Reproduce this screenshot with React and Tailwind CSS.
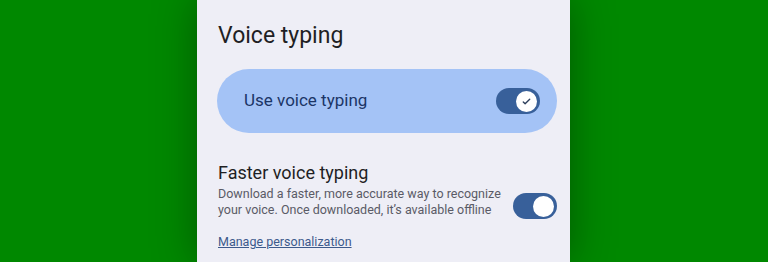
import React from 'react';

const Toggle = ({ check }) => (
  <div className="w-[44px] h-[26px] rounded-full bg-[#38609a] flex items-center justify-end pr-[3px]">
    <div className="w-[21px] h-[21px] rounded-full bg-white flex items-center justify-center">
      {check && (
        <svg width="11" height="11" viewBox="0 0 24 24" fill="none" stroke="#2c3e5c" strokeWidth="3" strokeLinecap="round" strokeLinejoin="round">
          <path d="M5 13l4 4L19 7" />
        </svg>
      )}
    </div>
  </div>
);

export default function App() {
  return (
    <div className="w-[768px] h-[262px] bg-[#008800] flex justify-center overflow-hidden" style={{ fontFamily: 'Roboto, "Noto Sans", sans-serif' }}>
      <div className="w-[373px] h-full bg-[#eeeef6] shadow-[0_0_40px_rgba(0,0,0,0.35)] ml-[-1px] pl-[20px] pr-[13px] pt-[21px]">
        <h1 className="text-[23px] leading-[30px] text-[#1f1f24] pl-[1px]">Voice typing</h1>
        <div className="mt-[18px] h-[64px] rounded-full bg-[#a4c3f6] flex items-center justify-between pl-[27px] pr-[17px]">
          <span className="text-[17px] text-[#1b3566]">Use voice typing</span>
          <Toggle check />
        </div>
        <div className="mt-[28px] flex items-start justify-between">
          <div className="pl-[1px]">
            <div className="text-[18px] leading-[24px] text-[#1f1f24]">Faster voice typing</div>
            <div className="text-[12.5px] leading-[16px] text-[#5a5b66] mt-[1px]">
              Download a faster, more accurate way to recognize<br />your voice. Once downloaded, it’s available offline
            </div>
          </div>
          <div className="mt-[32px]"><Toggle /></div>
        </div>
        <div className="mt-[14px] pl-[1px] text-[12.5px] text-[#3c5a8c] underline">Manage personalization</div>
      </div>
    </div>
  );
}
